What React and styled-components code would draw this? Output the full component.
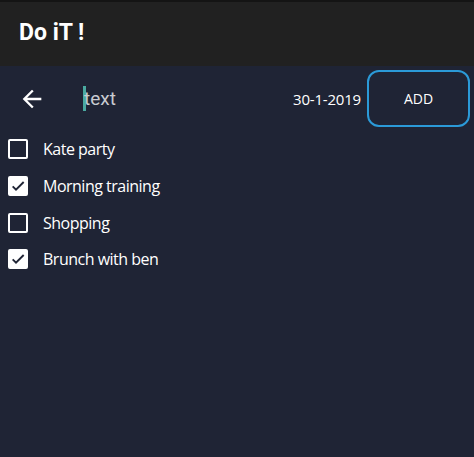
import React from "react";
import styled, { createGlobalStyle } from "styled-components";

const Global = createGlobalStyle`
  html, body { margin: 0; padding: 0; height: 100%; }
  body { background: #1f2435; font-family: "Open Sans", "Noto Sans", sans-serif; }
  #root { min-height: 100vh; }
`;

const Page = styled.div`
  min-height: 100vh;
  background: #1f2435;
  display: flex;
  flex-direction: column;
`;

const Header = styled.header`
  height: 64px;
  border-top: 2px solid #141414;
  background: #212121;
  display: flex;
  align-items: center;
  padding-left: 19px;
`;

const Title = styled.h1`
  margin: 0;
  font-family: Roboto, "Noto Sans", sans-serif;
  font-weight: 700;
  font-size: 23px;
  color: #ffffff;
  padding-bottom: 3px;
`;

const Toolbar = styled.div`
  display: flex;
  align-items: center;
  padding: 4px 4px 0 18px;
`;

const BackButton = styled.button`
  background: none;
  border: 0;
  padding: 0;
  width: 28px;
  height: 28px;
  display: flex;
  cursor: pointer;
  color: #ffffff;
`;

const InputField = styled.div`
  flex: 1;
  display: flex;
  align-items: center;
  margin-left: 37px;
  height: 26px;
`;

const Caret = styled.span`
  width: 3px;
  height: 25px;
  background: #4aa9a0;
`;

const Placeholder = styled.span`
  font-family: Roboto, "Noto Sans", sans-serif;
  font-size: 19px;
  color: #c9cbd1;
  margin-left: -2px;
`;

const DateText = styled.span`
  font-size: 15px;
  letter-spacing: -0.2px;
  color: #ffffff;
  margin-right: 6px;
`;

const AddButton = styled.button`
  width: 103px;
  height: 57px;
  box-sizing: border-box;
  border: 2px solid #2b9ad8;
  border-radius: 12px;
  background: transparent;
  color: #ffffff;
  font-family: "Open Sans", "Noto Sans", sans-serif;
  font-size: 14px;
  cursor: pointer;
`;

const List = styled.ul`
  list-style: none;
  margin: 4px 0 0;
  padding: 0 0 0 8px;
  display: flex;
  flex-direction: column;
`;

const Row = styled.li`
  height: 36.7px;
  display: flex;
  align-items: center;
  gap: 15px;
`;

const Box = styled.span`
  width: 20px;
  height: 20px;
  box-sizing: border-box;
  border-radius: 2px;
  border: 2px solid #ffffff;
  background: ${(p) => (p.$checked ? "#ffffff" : "transparent")};
  display: flex;
  align-items: center;
  justify-content: center;
`;

const Label = styled.span`
  font-size: 16px;
  letter-spacing: -0.5px;
  color: #ffffff;
`;

const items = [
  { text: "Kate party", done: false },
  { text: "Morning training", done: true },
  { text: "Shopping", done: false },
  { text: "Brunch with ben", done: true },
];

export default function App() {
  return (
    <Page>
      <Global />
      <Header>
        <Title>Do iT !</Title>
      </Header>
      <Toolbar>
        <BackButton aria-label="back">
          <svg width="28" height="28" viewBox="0 0 24 24" fill="currentColor">
            <path d="M20 11H7.83l5.59-5.59L12 4l-8 8 8 8 1.41-1.41L7.83 13H20v-2z" />
          </svg>
        </BackButton>
        <InputField>
          <Caret />
          <Placeholder>text</Placeholder>
        </InputField>
        <DateText>30-1-2019</DateText>
        <AddButton>ADD</AddButton>
      </Toolbar>
      <List>
        {items.map((it) => (
          <Row key={it.text}>
            <Box $checked={it.done}>
              {it.done && (
                <svg width="18" height="18" viewBox="0 0 24 24">
                  <path d="M4 12.5l5 5L20.5 6" fill="none" stroke="#1f2435" strokeWidth="2.8" />
                </svg>
              )}
            </Box>
            <Label>{it.text}</Label>
          </Row>
        ))}
      </List>
    </Page>
  );
}
